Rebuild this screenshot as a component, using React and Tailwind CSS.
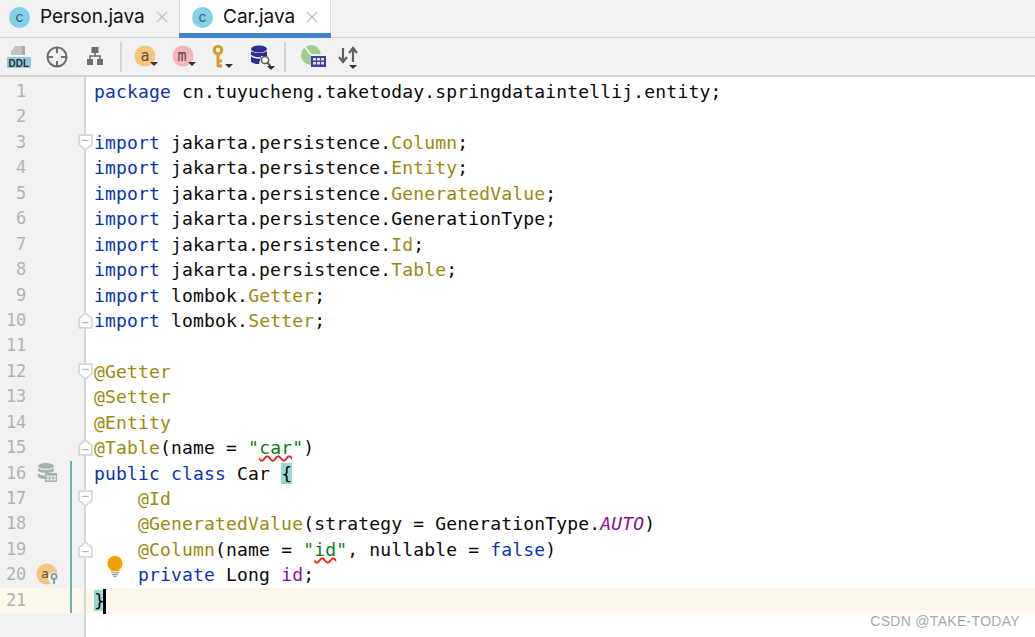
import React from "react";

const KW = "text-[#0a33b3]";
const ANN = "text-[#9e880d]";
const STR = "text-[#067d17]";
const PUR = "text-[#871094]";

const k = (t) => <span className={KW}>{t}</span>;
const a = (t) => <span className={ANN}>{t}</span>;

function Imp({ pkg, name, plain }) {
  return (
    <>
      {k("import")} {pkg}.{plain ? name : a(name)};
    </>
  );
}

const Squiggle = ({ children }) => (
  <span className="underline decoration-wavy decoration-[#f02020] decoration-[1.5px] underline-offset-[1px]">{children}</span>
);

const lines = [
  <>{k("package")} cn.tuyucheng.taketoday.springdataintellij.entity;</>,
  null,
  <Imp pkg="jakarta.persistence" name="Column" />,
  <Imp pkg="jakarta.persistence" name="Entity" />,
  <Imp pkg="jakarta.persistence" name="GeneratedValue" />,
  <Imp pkg="jakarta.persistence" name="GenerationType" plain />,
  <Imp pkg="jakarta.persistence" name="Id" />,
  <Imp pkg="jakarta.persistence" name="Table" />,
  <Imp pkg="lombok" name="Getter" />,
  <Imp pkg="lombok" name="Setter" />,
  null,
  a("@Getter"),
  a("@Setter"),
  a("@Entity"),
  <>{a("@Table")}(name = <span className={STR}>"<Squiggle>car</Squiggle>"</span>)</>,
  <>{k("public class")} Car <span className="bg-[#99d8d3]">{"{"}</span></>,
  <>{"    "}{a("@Id")}</>,
  <>{"    "}{a("@GeneratedValue")}(strategy = GenerationType.<span className={`${PUR} italic`}>AUTO</span>)</>,
  <>{"    "}{a("@Column")}(name = <span className={STR}>"<Squiggle>id</Squiggle>"</span>, nullable = {k("false")})</>,
  <>{"    "}{k("private")} Long <span className={PUR}>id</span>;</>,
  <span className="relative bg-[#99d8d3]">{"}"}<span className="absolute left-[9px] top-[-1px] h-[25px] w-[3px] bg-black" /></span>,
];

// line number -> fold marker kind
const folds = { 3: "open", 10: "close", 12: "open", 15: "close", 17: "open", 19: "close" };

function Fold({ kind }) {
  const d = kind === "open" ? "M1 1H13V10L7 15L1 10Z" : "M1 15H13V6L7 1L1 6Z";
  const y = kind === "open" ? 6 : 10;
  return (
    <svg className="absolute left-[78px] top-[4px] z-10" width="15" height="17" viewBox="0 0 14 16">
      <path d={d} fill="#fff" stroke="#d6d6d6" strokeWidth="1.6" />
      <path d={`M4 ${y}H10`} stroke="#b5b5b5" strokeWidth="1.2" />
    </svg>
  );
}

function TableDbIcon() {
  return (
    <svg className="absolute left-[37px] top-[1px]" width="21" height="21" viewBox="0 0 21 21">
      <ellipse cx="9" cy="4" rx="8" ry="3" fill="#a9b0b0" />
      <path d="M1 6c2 2.5 14 2.5 16 0v3c-2 2.5-14 2.5-16 0zM1 11c2 2.5 6 2.5 8 2.5V17c-3 0-7-.6-8-2.5z" fill="#a9b0b0" />
      <rect x="8" y="11" width="12" height="9" fill="#a9b0b0" />
      <path d="M9.5 13.5h2.5v2h-2.5zM13 13.5h2.5v2H13zM16.5 13.5H19v2h-2.5zM9.5 16.5h2.5v2h-2.5zM13 16.5h2.5v2H13zM16.5 16.5H19v2h-2.5z" fill="#eee" />
    </svg>
  );
}

function AnnotKeyIcon() {
  return (
    <svg className="absolute left-[36px] top-[1px]" width="22" height="22" viewBox="0 0 22 22">
      <circle cx="11" cy="11" r="10.5" fill="#f4c67f" />
      <circle cx="18" cy="15" r="6" fill="#f2f2f2" />
      <circle cx="18" cy="13.5" r="2.6" fill="none" stroke="#7d9aa6" strokeWidth="1.6" />
      <path d="M18 16v5" stroke="#7d9aa6" strokeWidth="1.8" />
      <text x="5" y="15" fontSize="13" fontFamily="'DejaVu Sans Mono', monospace" fill="#5a5040">a</text>
    </svg>
  );
}

function Bulb() {
  return (
    <svg className="absolute left-[106px] top-[-7px] z-10" width="18" height="23" viewBox="0 0 18 24">
      <path d="M9 1a7.8 7.8 0 0 0-5 13.8c.8.8 1 1.6 1 2.2h8c0-.6.2-1.4 1-2.2A7.8 7.8 0 0 0 9 1z" fill="#f2a200" />
      <path d="M5 18.5h8M6 20.5h6M7.5 22.5h3" stroke="#8f8f8f" strokeWidth="1.1" />
    </svg>
  );
}

function Row({ n, children }) {
  const current = n === 21;
  return (
    <div className={`relative flex h-[25.45px] ${current ? "bg-[#fcf9ec]" : ""}`}>
      <div className={`relative w-[86px] shrink-0 border-r-2 border-[#d6d6d6] ${current ? "" : "bg-[#f2f2f2]"}`}>
        <span className="block w-[26px] text-right font-['DejaVu_Sans_Mono',monospace] text-[17px] leading-[25px] tracking-[-0.2px] text-[#b2b2b2]">
          {n}
        </span>
        {n === 16 && <TableDbIcon />}
        {n === 20 && <AnnotKeyIcon />}
        {n >= 16 && <span className="absolute left-[70px] top-0 h-full w-[2px] bg-[#6fb0ac]" />}
      </div>
      {folds[n] && <Fold kind={folds[n]} />}
      {n === 20 && <Bulb />}
      <pre className="ml-[8px] font-['DejaVu_Sans_Mono',monospace] text-[18px] leading-[25px] tracking-[0.17px] text-[#080808]">
        {children}
      </pre>
    </div>
  );
}

function FileTab({ name, active }) {
  return (
    <div className={`relative flex h-[38px] items-center pb-[4px] ${active ? "w-[152px] border-x border-[#dcdcdc] bg-white pl-[12px]" : "w-[179px] pl-[9px]"}`}>
      <span className="flex h-[21px] w-[21px] items-center justify-center rounded-full bg-[#84d0ea] pb-[2px] font-['Inter',sans-serif] text-[14px] text-[#3c5a68]">
        c
      </span>
      <span className="ml-[10px] font-['Inter',sans-serif] text-[19px] text-[#111]">{name}</span>
      <svg className="ml-[11px]" width="12" height="12" viewBox="0 0 12 12">
        <path d="M1 1L11 11M11 1L1 11" stroke="#c4c4c4" strokeWidth="1.4" />
      </svg>
      {active && <span className="absolute inset-x-[-1px] bottom-0 h-[5px] bg-[#4083c9]" />}
    </div>
  );
}

const Caret = ({ x = 23, y = 19 }) => <path d={`M${x} ${y}h8l-4 4z`} fill="#333" />;

function Tool({ children }) {
  return (
    <div className="flex h-[30px] w-[38px] shrink-0 items-center justify-center">
      <svg width="34" height="28" viewBox="0 0 34 28">{children}</svg>
    </div>
  );
}

const Sep = ({ className }) => <span className={`h-[30px] w-[2px] shrink-0 bg-[#d4d4d4] ${className}`} />;

function Toolbar() {
  return (
    <div className="flex h-[39px] items-center border-b-2 border-[#d6d6d6] bg-[#f2f2f2]">
      <Tool>
        <path d="M13 3h10v9H9V8z" fill="#c4c4c4" />
        <path d="M20 3h3v9h-3z" fill="#a8a8a8" />
        <rect x="5" y="14" width="24" height="11" fill="#8fcbe3" />
        <text x="6.5" y="23.5" fontSize="10" fontWeight="700" fontFamily="'Liberation Sans', sans-serif" fill="#333">DDL</text>
      </Tool>
      <Tool>
        <circle cx="17" cy="14" r="9.5" fill="none" stroke="#6e6e6e" strokeWidth="2" />
        <path d="M17 4v6M17 18v6M7 14h6M21 14h6" stroke="#6e6e6e" strokeWidth="2" />
      </Tool>
      <Tool>
        <path d="M13.5 4h7v6h-7zM9 16h6v6H9zM19 16h6v6h-6z" fill="#6e6e6e" />
        <path d="M17 10v3M12 16v-3h10v3" fill="none" stroke="#6e6e6e" strokeWidth="1.6" />
      </Tool>
      <Sep className="ml-[6px] mr-[4px]" />
      <Tool>
        <circle cx="17" cy="13" r="10.5" fill="#f4c67f" />
        <text x="12.5" y="18" fontSize="15" fontFamily="'DejaVu Sans Mono', monospace" fill="#5a5040">a</text>
        <Caret x={22} />
      </Tool>
      <Tool>
        <circle cx="17" cy="13" r="10.5" fill="#f6b4bc" />
        <text x="11.5" y="18" fontSize="15" fontFamily="'DejaVu Sans Mono', monospace" fill="#5a4a4a">m</text>
        <Caret x={22} />
      </Tool>
      <Tool>
        <circle cx="14" cy="7" r="3.8" fill="none" stroke="#d99a2b" strokeWidth="3" />
        <path d="M14 11V24M14 18h4M14 23h4" stroke="#d99a2b" strokeWidth="3" fill="none" />
        <Caret x={21} y={21} />
      </Tool>
      <div className="ml-[1px]">
        <Tool>
          <ellipse cx="16" cy="6" rx="8" ry="3.5" fill="#2d2d8f" />
          <path d="M8 8c2 2.5 14 2.5 16 0v5H18l-2 8c-3 0-7-.6-8-2.5z" fill="#2d2d8f" />
          <path d="M8 12.5c2 2 6 2.5 9 2.5" stroke="#fff" strokeWidth="1.5" fill="none" />
          <circle cx="22" cy="17" r="3.6" fill="#fff" stroke="#555" strokeWidth="1.5" />
          <path d="M24.5 20l3 3" stroke="#555" strokeWidth="1.8" />
          <Caret x={24} y={23} />
        </Tool>
      </div>
      <Sep className="ml-[5px] mr-[7px]" />
      <Tool>
        <circle cx="16" cy="12" r="10" fill="#9fcf8f" />
        <path d="M16 12L10 4M16 12L26 12" stroke="#fff" strokeWidth="1.5" />
        <rect x="16" y="13" width="15" height="11" fill="#3f3f9e" />
        <path d="M18 15h3v2.5h-3zM22 15h3v2.5h-3zM26 15h3v2.5h-3zM18 19h3v2.5h-3zM22 19h3v2.5h-3zM26 19h3v2.5h-3z" fill="#dcdcf0" />
      </Tool>
      <div className="ml-[-1px]">
        <Tool>
          <path d="M11 5v13M7 14l4 5 4-5M21 19V6M17 10l4-5 4 5" fill="none" stroke="#5f5f5f" strokeWidth="2.2" />
          <Caret x={17} y={22} />
        </Tool>
      </div>
    </div>
  );
}

export default function App() {
  return (
    <div className="relative h-[637px] w-[1035px] overflow-hidden bg-white">
      <div className="flex h-[38px] border-b border-[#d6d6d6] bg-[#f2f2f2]">
        <FileTab name="Person.java" />
        <FileTab name="Car.java" active />
      </div>
      <Toolbar />
      {/* small gap of gutter above line 1 */}
      <div className="h-[2px] w-[86px] border-r-2 border-[#d6d6d6] bg-[#f2f2f2]" />
      <div>
        {lines.map((line, i) => (
          <Row key={i} n={i + 1}>{line}</Row>
        ))}
      </div>
      {/* gutter continues below last line */}
      <div className="h-[30px] w-[86px] border-r-2 border-[#d6d6d6] bg-[#f2f2f2]" />
      <span className="absolute bottom-[5px] right-[15px] font-['Liberation_Sans',sans-serif] text-[14px] tracking-[0.3px] text-[#a8a8a8]">
        CSDN @TAKE-TODAY
      </span>
    </div>
  );
}
